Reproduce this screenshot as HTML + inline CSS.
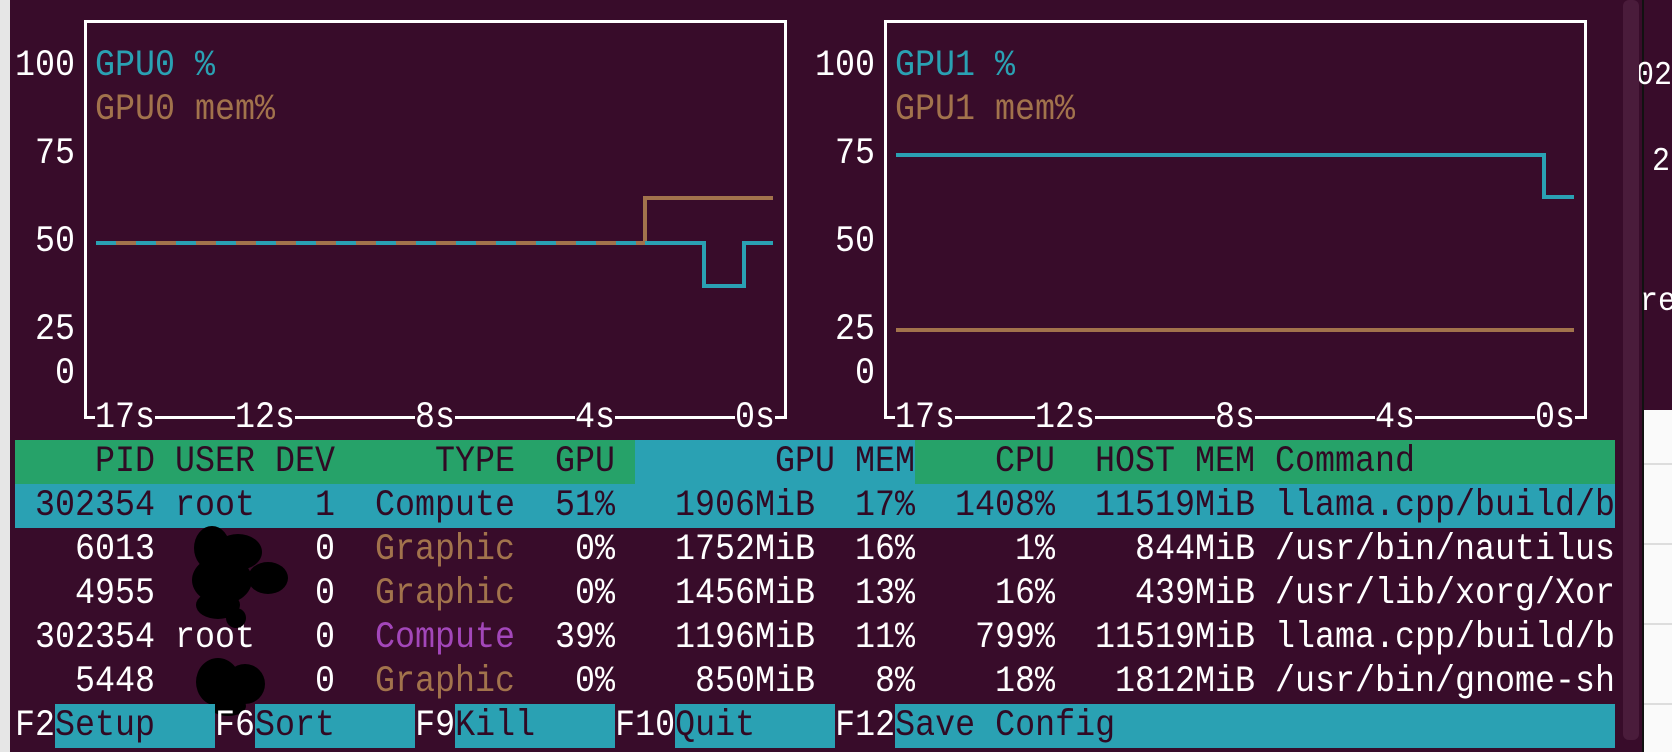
<!DOCTYPE html>
<html><head><meta charset="utf-8"><style>
body{margin:0;width:1672px;height:752px;overflow:hidden;background:#fafafa;position:relative;font-family:"Liberation Mono",monospace}
.term{position:absolute;left:10px;top:0;width:1632px;height:752px;background:#380c2a}
.r{position:absolute;left:15px;height:44px;line-height:44px;font-size:33.33px;white-space:pre;color:#fff;transform:scaleY(1.12)}
.a{position:absolute;white-space:pre;font-size:33.33px;line-height:44px;height:44px;color:#fff;transform:scaleY(1.12)}
.bar{position:absolute;height:44px}
.ln{position:absolute;background:#fff}
.c{color:#2aa1b3}.b{color:#a2734c}.m{color:#a347ba}.d{color:#300a24}
.bg{background:#380c2a}
</style></head><body>
<div style="position:absolute;left:0;top:0;width:10px;height:752px;background:#e6e6e6"></div>
<div class="term"></div>
<div style="position:absolute;left:1642px;top:0;width:2px;height:752px;background:#111"></div>
<div style="position:absolute;left:1644px;top:0;width:28px;height:410px;background:#380c2a"></div>
<div style="position:absolute;left:1644px;top:410px;width:28px;height:342px;background:#fafafa"></div>
<div style="position:absolute;left:1644px;top:463px;width:28px;height:2px;background:#ddd"></div>
<div style="position:absolute;left:1644px;top:543px;width:28px;height:2px;background:#ddd"></div>
<div style="position:absolute;left:1644px;top:623px;width:28px;height:2px;background:#ddd"></div>
<div style="position:absolute;left:1644px;top:703px;width:28px;height:2px;background:#ddd"></div>
<div class="a" style="left:1636px;top:54px;font-size:30px">02</div>
<div class="a" style="left:1652px;top:140px;font-size:30px">2</div>
<div class="a" style="left:1640px;top:280px;font-size:30px">re</div>
<div style="position:absolute;left:1623px;top:0;width:16px;height:740px;background:#4a1c3b;border-radius:6px"></div>

<div class="ln" style="left:84px;top:20px;width:703px;height:3px"></div>
<div class="ln" style="left:84px;top:20px;width:3px;height:399px"></div>
<div class="ln" style="left:784px;top:20px;width:3px;height:399px"></div>
<div class="ln" style="left:84px;top:416px;width:703px;height:3px"></div>
<div class="ln" style="left:884px;top:20px;width:703px;height:3px"></div>
<div class="ln" style="left:884px;top:20px;width:3px;height:399px"></div>
<div class="ln" style="left:1584px;top:20px;width:3px;height:399px"></div>
<div class="ln" style="left:884px;top:416px;width:703px;height:3px"></div>

<svg style="position:absolute;left:0;top:0" width="1672" height="752">
<line x1="96" y1="243" x2="645" y2="243" stroke="#2aa1b3" stroke-width="4"/>
<line x1="116" y1="243" x2="645" y2="243" stroke="#a2734c" stroke-width="4" stroke-dasharray="20 20"/>
<polyline points="645,243 645,198 773,198" fill="none" stroke="#a2734c" stroke-width="4"/>
<polyline points="645,243 704,243 704,286 744,286 744,243 773,243" fill="none" stroke="#2aa1b3" stroke-width="4"/>
<polyline points="896,155 1544,155 1544,197 1574,197" fill="none" stroke="#2aa1b3" stroke-width="4"/>
<line x1="896" y1="330" x2="1574" y2="330" stroke="#a2734c" stroke-width="4"/>
</svg>

<div class="a" style="left:15px;top:44px">100</div>
<div class="a" style="left:35px;top:132px">75</div>
<div class="a" style="left:35px;top:220px">50</div>
<div class="a" style="left:35px;top:308px">25</div>
<div class="a" style="left:55px;top:352px">0</div>
<div class="a c" style="left:95px;top:44px">GPU0 %</div>
<div class="a b" style="left:95px;top:88px">GPU0 mem%</div>
<div class="a bg" style="left:95px;top:396px">17s</div>
<div class="a bg" style="left:235px;top:396px">12s</div>
<div class="a bg" style="left:415px;top:396px">8s</div>
<div class="a bg" style="left:575px;top:396px">4s</div>
<div class="a bg" style="left:735px;top:396px">0s</div>
<div class="a" style="left:815px;top:44px">100</div>
<div class="a" style="left:835px;top:132px">75</div>
<div class="a" style="left:835px;top:220px">50</div>
<div class="a" style="left:835px;top:308px">25</div>
<div class="a" style="left:855px;top:352px">0</div>
<div class="a c" style="left:895px;top:44px">GPU1 %</div>
<div class="a b" style="left:895px;top:88px">GPU1 mem%</div>
<div class="a bg" style="left:895px;top:396px">17s</div>
<div class="a bg" style="left:1035px;top:396px">12s</div>
<div class="a bg" style="left:1215px;top:396px">8s</div>
<div class="a bg" style="left:1375px;top:396px">4s</div>
<div class="a bg" style="left:1535px;top:396px">0s</div>

<div class="bar" style="left:15px;top:440px;width:620px;background:#26a269"></div>
<div class="bar" style="left:635px;top:440px;width:280px;background:#2aa1b3"></div>
<div class="bar" style="left:915px;top:440px;width:700px;background:#26a269"></div>
<div class="r d" style="top:440px">    PID USER DEV     TYPE  GPU        GPU MEM    CPU  HOST MEM Command</div>
<div class="bar" style="left:15px;top:484px;width:1600px;background:#2aa1b3"></div>
<div class="r d" style="top:484px"> 302354 root   1  Compute  51%   1906MiB  17%  1408%  11519MiB llama.cpp/build/b</div>
<div class="r" style="top:528px">   6013        0  <span class="b">Graphic</span>   0%   1752MiB  16%     1%    844MiB /usr/bin/nautilus</div>
<div class="r" style="top:572px">   4955        0  <span class="b">Graphic</span>   0%   1456MiB  13%    16%    439MiB /usr/lib/xorg/Xor</div>
<div class="r" style="top:616px"> 302354 root   0  <span class="m">Compute</span>  39%   1196MiB  11%   799%  11519MiB llama.cpp/build/b</div>
<div class="r" style="top:660px">   5448        0  <span class="b">Graphic</span>   0%    850MiB   8%    18%   1812MiB /usr/bin/gnome-sh</div>
<svg style="position:absolute;left:0;top:0" width="1672" height="752">
<g fill="#000">
<ellipse cx="212" cy="548" rx="18" ry="22"/>
<ellipse cx="238" cy="552" rx="24" ry="18"/>
<ellipse cx="222" cy="580" rx="30" ry="24"/>
<ellipse cx="268" cy="578" rx="20" ry="16"/>
<ellipse cx="218" cy="605" rx="22" ry="14"/>
<ellipse cx="236" cy="618" rx="10" ry="10"/>
<ellipse cx="218" cy="682" rx="22" ry="24"/>
<ellipse cx="245" cy="684" rx="20" ry="20"/>
<ellipse cx="228" cy="706" rx="18" ry="10"/>
</g></svg>

<div class="bar" style="left:55px;top:704px;width:160px;background:#2aa1b3"></div>
<div class="bar" style="left:255px;top:704px;width:160px;background:#2aa1b3"></div>
<div class="bar" style="left:455px;top:704px;width:160px;background:#2aa1b3"></div>
<div class="bar" style="left:675px;top:704px;width:160px;background:#2aa1b3"></div>
<div class="bar" style="left:895px;top:704px;width:720px;background:#2aa1b3"></div>
<div class="r" style="top:704px">F2<span class="d">Setup   </span>F6<span class="d">Sort    </span>F9<span class="d">Kill    </span>F10<span class="d">Quit    </span>F12<span class="d">Save Config</span></div>
</body></html>
